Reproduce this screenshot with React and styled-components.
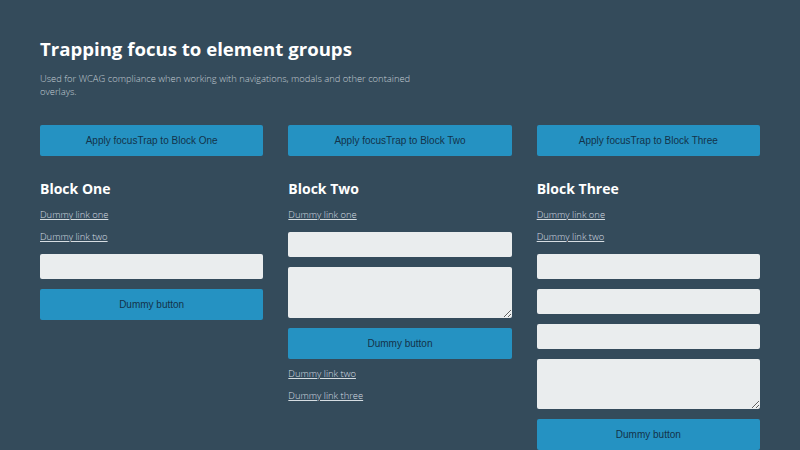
import React from "react";
import styled, { createGlobalStyle } from "styled-components";

const GlobalStyle = createGlobalStyle`
  html, body {
    margin: 0;
    padding: 0;
    background: #344b5b;
  }
  body {
    font-family: "Open Sans", "Liberation Sans", sans-serif;
    color: #ffffff;
  }
`;

const Page = styled.main`
  padding: 36px 40px 0;
  min-height: 450px;
  box-sizing: border-box;
  overflow: hidden;
`;

const Title = styled.h1`
  margin: 0;
  font-size: 18.6px;
  line-height: 26px;
  font-weight: 700;
  color: #ffffff;
`;

const Intro = styled.p`
  margin: 10px 0 0;
  max-width: 390px;
  font-size: 9.4px;
  line-height: 13px;
  font-weight: 300;
  color: #c3ccd3;
`;

const Columns = styled.div`
  display: grid;
  grid-template-columns: repeat(3, 1fr);
  column-gap: 25px;
  margin-top: 27px;
`;

const Column = styled.section`
  display: flex;
  flex-direction: column;
`;

const Button = styled.button`
  display: block;
  width: 100%;
  height: 31px;
  margin: 0 0 ${(p) => p.$mb ?? 10}px;
  padding: 0;
  border: none;
  border-radius: 2px;
  background: #2592c2;
  color: #13324a;
  font-family: "Liberation Sans", Arial, sans-serif;
  font-size: 10px;
  cursor: pointer;
`;

const BlockTitle = styled.h2`
  margin: 0 0 11px;
  font-size: 14px;
  line-height: 20px;
  font-weight: 700;
  color: #ffffff;
`;

const Link = styled.a`
  display: block;
  align-self: flex-start;
  margin: 0 0 12px;
  font-size: 9.4px;
  line-height: 10px;
  font-weight: 300;
  color: #d6dde2;
  text-decoration: underline;
`;

const Input = styled.input`
  display: block;
  box-sizing: border-box;
  width: 100%;
  height: 25px;
  margin: 0 0 10px;
  border: none;
  border-radius: 2px;
  background: #eaedee;
`;

const TextArea = styled.textarea`
  display: block;
  box-sizing: border-box;
  width: 100%;
  height: ${(p) => p.$h ?? 50}px;
  margin: 0 0 10px;
  border: none;
  border-radius: 2px;
  background: #eaedee;
  resize: vertical;
`;

const blocks = ["One", "Two", "Three"];

export default function App() {
  return (
    <>
      <GlobalStyle />
      <Page>
        <Title>Trapping focus to element groups</Title>
        <Intro>
          Used for WCAG compliance when working with navigations, modals and
          other contained overlays.
        </Intro>
        <Columns>
          {blocks.map((b) => (
            <Column key={b}>
              <Button $mb={23}>Apply focusTrap to Block {b}</Button>
              <BlockTitle>Block {b}</BlockTitle>
              {b === "One" && (
                <>
                  <Link href="#">Dummy link one</Link>
                  <Link href="#">Dummy link two</Link>
                  <Input />
                  <Button>Dummy button</Button>
                </>
              )}
              {b === "Two" && (
                <>
                  <Link href="#">Dummy link one</Link>
                  <Input />
                  <TextArea $h={51} />
                  <Button>Dummy button</Button>
                  <Link href="#">Dummy link two</Link>
                  <Link href="#">Dummy link three</Link>
                </>
              )}
              {b === "Three" && (
                <>
                  <Link href="#">Dummy link one</Link>
                  <Link href="#">Dummy link two</Link>
                  <Input />
                  <Input />
                  <Input />
                  <TextArea />
                  <Button>Dummy button</Button>
                </>
              )}
            </Column>
          ))}
        </Columns>
      </Page>
    </>
  );
}
